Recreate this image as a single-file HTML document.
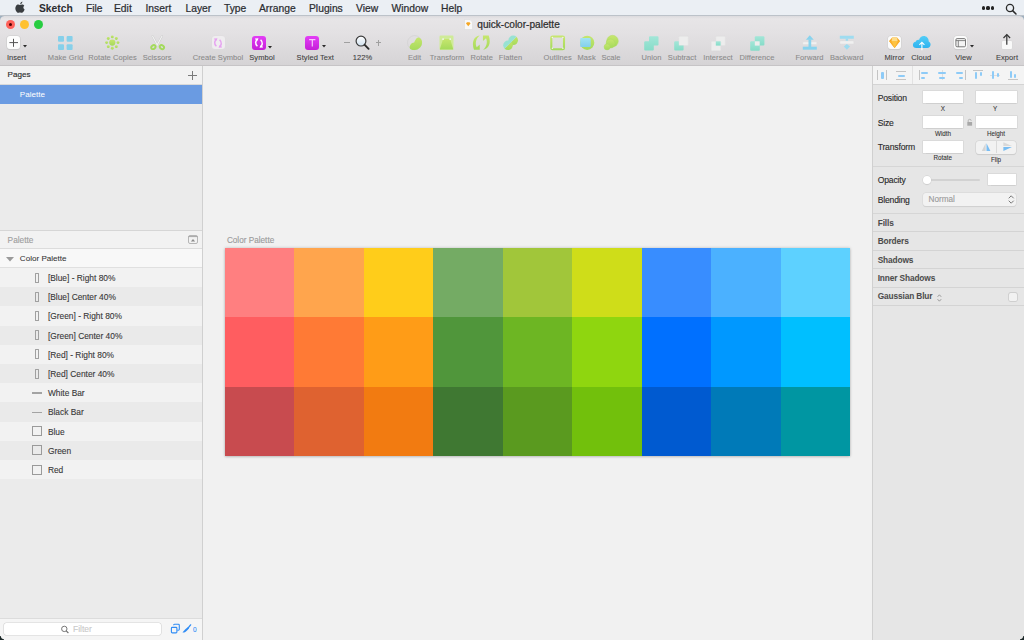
<!DOCTYPE html>
<html><head><meta charset="utf-8"><style>
html,body{margin:0;padding:0;width:1024px;height:640px;overflow:hidden;background:#f1f1f1;font-family:"Liberation Sans", sans-serif;}
.a{position:absolute;}
.t{position:absolute;line-height:1;white-space:nowrap;}
svg{overflow:visible}
</style></head><body>
<div class="a" style="left:0px;top:0px;width:1024px;height:16px;background:#ebeff4"></div>
<div class="a" style="left:0px;top:15px;width:1024px;height:1px;background:#bcc2c9"></div>
<svg class="a" style="left:14.5px;top:1px" width="11" height="13" viewBox="0 0 11 13"><path d="M4.9 4.1C5.6 4.1 6.2 3.6 7.1 3.6 8 3.6 8.8 4.1 9.3 4.8 8.1 5.5 7.9 7.5 9.6 8.4 9.3 9.3 8.9 10 8.4 10.7 7.9 11.4 7.4 11.8 6.8 11.8 6.1 11.8 5.8 11.4 4.9 11.4 4 11.4 3.7 11.8 3.1 11.8 2.3 11.8 1.7 11 1.2 10.2 .2 8.6 0 6.4 1 5 1.6 4.1 2.4 3.6 3.3 3.6 4 3.6 4.4 4.1 4.9 4.1z" fill="#3a3d40"/><path d="M5.2 3.2C5.2 2 6.1 .9 7.4 .5 7.5 1.8 6.5 3 5.2 3.2z" fill="#3a3d40"/></svg>
<div class="t" style="left:39px;top:3.68px;font-size:10.3px;color:#2b2d31;font-weight:700;letter-spacing:0px;-webkit-text-stroke-width:0px;">Sketch</div>
<div class="t" style="left:86px;top:3.68px;font-size:10.3px;color:#2b2d31;font-weight:400;letter-spacing:0px;-webkit-text-stroke-width:0.22px;">File</div>
<div class="t" style="left:114px;top:3.68px;font-size:10.3px;color:#2b2d31;font-weight:400;letter-spacing:0px;-webkit-text-stroke-width:0.22px;">Edit</div>
<div class="t" style="left:145.5px;top:3.68px;font-size:10.3px;color:#2b2d31;font-weight:400;letter-spacing:0px;-webkit-text-stroke-width:0.22px;">Insert</div>
<div class="t" style="left:185.5px;top:3.68px;font-size:10.3px;color:#2b2d31;font-weight:400;letter-spacing:0px;-webkit-text-stroke-width:0.22px;">Layer</div>
<div class="t" style="left:224px;top:3.68px;font-size:10.3px;color:#2b2d31;font-weight:400;letter-spacing:0px;-webkit-text-stroke-width:0.22px;">Type</div>
<div class="t" style="left:259px;top:3.68px;font-size:10.3px;color:#2b2d31;font-weight:400;letter-spacing:0px;-webkit-text-stroke-width:0.22px;">Arrange</div>
<div class="t" style="left:309px;top:3.68px;font-size:10.3px;color:#2b2d31;font-weight:400;letter-spacing:0px;-webkit-text-stroke-width:0.22px;">Plugins</div>
<div class="t" style="left:356px;top:3.68px;font-size:10.3px;color:#2b2d31;font-weight:400;letter-spacing:0px;-webkit-text-stroke-width:0.22px;">View</div>
<div class="t" style="left:391.5px;top:3.68px;font-size:10.3px;color:#2b2d31;font-weight:400;letter-spacing:0px;-webkit-text-stroke-width:0.22px;">Window</div>
<div class="t" style="left:441px;top:3.68px;font-size:10.3px;color:#2b2d31;font-weight:400;letter-spacing:0px;-webkit-text-stroke-width:0.22px;">Help</div>
<div class="a" style="left:981.9px;top:6.4px;width:3.2px;height:3.2px;background:#222;border-radius:50%"></div>
<div class="a" style="left:986.4px;top:6.4px;width:3.2px;height:3.2px;background:#222;border-radius:50%"></div>
<div class="a" style="left:990.9px;top:6.4px;width:3.2px;height:3.2px;background:#222;border-radius:50%"></div>
<svg class="a" style="left:1005px;top:3px" width="13" height="12" viewBox="0 0 13 12"><circle cx="5" cy="5" r="3.6" fill="none" stroke="#2a2a2a" stroke-width="1.3"/><path d="M7.6 7.6L11 11" stroke="#2a2a2a" stroke-width="1.5" stroke-linecap="round"/></svg>
<div class="a" style="left:0px;top:16px;width:1024px;height:50px;background:linear-gradient(#dcdbde,#e7e5e7 6%,#e3e1e3 35%,#d5d3d5)"></div>
<div class="a" style="left:0px;top:65px;width:1024px;height:1px;background:#c6c4c6"></div>
<div class="a" style="left:5.6px;top:19.8px;width:9px;height:9px;background:#ff6159;border-radius:50%"></div>
<div class="a" style="left:19.9px;top:19.8px;width:9px;height:9px;background:#ffc130;border-radius:50%"></div>
<div class="a" style="left:34.1px;top:19.8px;width:9px;height:9px;background:#28cd41;border-radius:50%"></div>
<div class="a" style="left:8.6px;top:22.8px;width:3px;height:3px;background:#4d0000;border-radius:50%"></div>
<svg class="a" style="left:464px;top:19px" width="9" height="11" viewBox="0 0 9 11"><path d="M0.5 0.5h5.5l2.5 2.5v7.5h-8z" fill="#f8f8f8" stroke="#dcdcdc" stroke-width="0.6"/><path d="M2 4.5l1-1.3h2.5l1 1.3-2.25 2.8z" fill="#f5a623"/></svg>
<div class="t" style="left:477.3px;top:19.75px;font-size:10.1px;color:#2e2e2e;font-weight:400;letter-spacing:0px;-webkit-text-stroke-width:0.22px;">quick-color-palette</div>
<svg class="a" style="left:0;top:0" width="0" height="0"><defs><linearGradient id="gg" x1="0" y1="0" x2="0" y2="1"><stop offset="0" stop-color="#c6e66e"/><stop offset="1" stop-color="#a5da5b"/></linearGradient><linearGradient id="tg" x1="0" y1="0" x2="0" y2="1"><stop offset="0" stop-color="#a3e6d8"/><stop offset="1" stop-color="#86dcc8"/></linearGradient><linearGradient id="bg" x1="0" y1="0" x2="0" y2="1"><stop offset="0" stop-color="#a2e3f3"/><stop offset="1" stop-color="#84d0ec"/></linearGradient><linearGradient id="cg" x1="0" y1="0" x2="0" y2="1"><stop offset="0" stop-color="#52cdf7"/><stop offset="1" stop-color="#2fb3ef"/></linearGradient><linearGradient id="lens" x1="0" y1="0" x2="0" y2="1"><stop offset="0" stop-color="#ffffff"/><stop offset="1" stop-color="#cfe0ee"/></linearGradient></defs></svg>
<div class="a" style="left:6.6px;top:35.7px;width:13.7px;height:13.6px;background:#fdfdfd;border-radius:3px;box-shadow:0 0 0 0.6px #cdcdcd, 0 0.6px 1px rgba(0,0,0,.12)"></div>
<svg class="a" style="left:0px;top:30px" width="24" height="24" viewBox="0 0 24 24"><path d="M13.5 8.8v8M9.4 12.6h8.6" stroke="#555" stroke-width="1"/></svg>
<svg class="a" style="left:23px;top:45.3px" width="5" height="3" viewBox="0 0 5 3"><path d="M0 0h4L2 2.6z" fill="#2a2a2a"/></svg>
<div class="t" style="left:-83.5px;width:200px;text-align:center;top:53.85px;font-size:7.5px;color:#3e3e3e;font-weight:400;letter-spacing:0.08px;-webkit-text-stroke-width:0.08px;">Insert</div>
<svg class="a" style="left:58px;top:36px" width="15" height="14" viewBox="0 0 15 14"><g fill="#86d0ea"><rect x="0" y="0" width="6" height="5.8" rx="1"/><rect x="8.6" y="0" width="6" height="5.8" rx="1"/><rect x="0" y="8.2" width="6" height="5.8" rx="1"/><rect x="8.6" y="8.2" width="6" height="5.8" rx="1"/></g></svg>
<div class="t" style="left:-34.5px;width:200px;text-align:center;top:53.85px;font-size:7.5px;color:#8a8a8a;font-weight:400;letter-spacing:0.08px;-webkit-text-stroke-width:0.08px;">Make Grid</div>
<svg class="a" style="left:105px;top:35px" width="15" height="15" viewBox="0 0 15 15"><g fill="url(#gg)"><circle cx="13.00" cy="7.60" r="1.45"/><circle cx="11.33" cy="11.63" r="1.45"/><circle cx="7.30" cy="13.30" r="1.45"/><circle cx="3.27" cy="11.63" r="1.45"/><circle cx="1.60" cy="7.60" r="1.45"/><circle cx="3.27" cy="3.57" r="1.45"/><circle cx="7.30" cy="1.90" r="1.45"/><circle cx="11.33" cy="3.57" r="1.45"/><circle cx="7.3" cy="7.6" r="3.1"/></g></svg>
<div class="t" style="left:12.599999999999994px;width:200px;text-align:center;top:53.85px;font-size:7.5px;color:#8a8a8a;font-weight:400;letter-spacing:0.08px;-webkit-text-stroke-width:0.08px;">Rotate Copies</div>
<svg class="a" style="left:150px;top:35px" width="15" height="15" viewBox="0 0 15 15"><path d="M2.6 1.2L7.4 10.2M11.9 1.2L7.1 10.2" stroke="#c9c9c9" stroke-width="1.9" stroke-linecap="round"/><path d="M2.6 1.2L7.4 10.2M11.9 1.2L7.1 10.2" stroke="#f3f3f3" stroke-width="1.1" stroke-linecap="round"/><g fill="none" stroke="#a3da5c" stroke-width="1.9"><ellipse cx="3.4" cy="12.1" rx="2.3" ry="1.8" transform="rotate(-40 3.4 12.1)"/><ellipse cx="11.9" cy="12.1" rx="2.3" ry="1.8" transform="rotate(40 11.9 12.1)"/></g></svg>
<div class="t" style="left:57.19999999999999px;width:200px;text-align:center;top:53.85px;font-size:7.5px;color:#8a8a8a;font-weight:400;letter-spacing:0.08px;-webkit-text-stroke-width:0.08px;">Scissors</div>
<div class="a" style="left:211.8px;top:36.2px;width:13px;height:13.3px;background:#efedef;border-radius:3px;box-shadow:0 0 0 0.5px #dedcde"></div>
<svg class="a" style="left:211.4px;top:36px" width="14" height="14" viewBox="0 0 14 14"><path d="M6 3.4C3.4 4.2 2.7 7.8 5.4 10.3" fill="none" stroke="#e6a3f0" stroke-width="1.5"/><path d="M2.9 2.6L6.6 2.3 4.6 5.6z" fill="#e6a3f0"/><path d="M8 10.6C10.6 9.8 11.3 6.2 8.6 3.7" fill="none" stroke="#e6a3f0" stroke-width="1.5"/><path d="M11.1 11.4L7.4 11.7 9.4 8.4z" fill="#e6a3f0"/></svg>
<div class="t" style="left:118px;width:200px;text-align:center;top:53.85px;font-size:7.5px;color:#8a8a8a;font-weight:400;letter-spacing:0.08px;-webkit-text-stroke-width:0.08px;">Create Symbol</div>
<div class="a" style="left:252.1px;top:35.8px;width:13.7px;height:14px;background:linear-gradient(#e33ef6,#c51ed8);border-radius:3px"></div>
<svg class="a" style="left:252px;top:35.8px" width="14" height="14" viewBox="0 0 14 14"><path d="M6 3.4C3.4 4.2 2.7 7.8 5.4 10.3" fill="none" stroke="#ffffff" stroke-width="1.5"/><path d="M2.9 2.6L6.6 2.3 4.6 5.6z" fill="#ffffff"/><path d="M8 10.6C10.6 9.8 11.3 6.2 8.6 3.7" fill="none" stroke="#ffffff" stroke-width="1.5"/><path d="M11.1 11.4L7.4 11.7 9.4 8.4z" fill="#ffffff"/></svg>
<svg class="a" style="left:268.4px;top:45.6px" width="5" height="3" viewBox="0 0 5 3"><path d="M0 0h4L2 2.6z" fill="#2a2a2a"/></svg>
<div class="t" style="left:162px;width:200px;text-align:center;top:53.85px;font-size:7.5px;color:#3e3e3e;font-weight:400;letter-spacing:0.08px;-webkit-text-stroke-width:0.08px;">Symbol</div>
<div class="a" style="left:305px;top:35.5px;width:14.3px;height:14.6px;background:linear-gradient(#e33ef6,#c51ed8);border-radius:3px"></div>
<svg class="a" style="left:305px;top:35.5px" width="15" height="15" viewBox="0 0 15 15"><path d="M4.1 3.7h6.3M7.25 3.7v6.8" stroke="#fbe6ff" stroke-width="1"/></svg>
<svg class="a" style="left:321.8px;top:45.2px" width="5" height="3" viewBox="0 0 5 3"><path d="M0 0h4L2 2.6z" fill="#2a2a2a"/></svg>
<div class="t" style="left:215.3px;width:200px;text-align:center;top:53.85px;font-size:7.5px;color:#3e3e3e;font-weight:400;letter-spacing:0.08px;-webkit-text-stroke-width:0.08px;">Styled Text</div>
<div class="a" style="left:344.1px;top:42.3px;width:5.9px;height:1.1px;background:#a0a0a0"></div>
<svg class="a" style="left:350px;top:30px" width="24" height="24" viewBox="0 0 24 24"><circle cx="11" cy="11.1" r="4.9" fill="url(#lens)" stroke="#3a3a3a" stroke-width="1.2"/><path d="M14.7 14.8L18.6 18.8" stroke="#2a2a2a" stroke-width="1.9" stroke-linecap="round"/></svg>
<div class="a" style="left:375.6px;top:42.3px;width:5.5px;height:1.1px;background:#a0a0a0"></div>
<div class="a" style="left:377.8px;top:40px;width:1.1px;height:5.5px;background:#a0a0a0"></div>
<div class="t" style="left:262.6px;width:200px;text-align:center;top:53.85px;font-size:7.5px;color:#3e3e3e;font-weight:400;letter-spacing:0.08px;-webkit-text-stroke-width:0.08px;">122%</div>
<svg class="a" style="left:404px;top:32px" width="22" height="22" viewBox="0 0 22 22"><circle cx="10.6" cy="10.7" r="7.1" fill="none" stroke="#cfcfcf" stroke-width="0.6"/><path d="M14.8 5.6C17.4 6.5 18.6 9 17.9 11.9 17.2 15 14.4 17.6 11 18 8.4 18.3 6.2 17.5 5.7 15.9 5.3 14.4 6.4 12.1 8.1 10.9L10.2 10.4C10.8 9 11.6 7.2 12.6 6.2 13.2 5.7 14 5.4 14.8 5.6z" fill="url(#gg)"/></svg>
<div class="t" style="left:314.6px;width:200px;text-align:center;top:53.85px;font-size:7.5px;color:#8a8a8a;font-weight:400;letter-spacing:0.08px;-webkit-text-stroke-width:0.08px;">Edit</div>
<svg class="a" style="left:436px;top:32px" width="20" height="20" viewBox="0 0 20 20"><rect x="3.5" y="3.5" width="14" height="14.3" rx="1.2" fill="#cfeb98"/><path d="M7.1 7.1h7.1l3.1 10.4H3.8z" fill="url(#gg)"/><circle cx="7.1" cy="7.1" r="0.95" fill="#f4f4f4"/><circle cx="14.2" cy="7.1" r="0.95" fill="#f4f4f4"/></svg>
<div class="t" style="left:347px;width:200px;text-align:center;top:53.85px;font-size:7.5px;color:#8a8a8a;font-weight:400;letter-spacing:0.08px;-webkit-text-stroke-width:0.08px;">Transform</div>
<svg class="a" style="left:468px;top:32px" width="24" height="20" viewBox="0 0 24 20"><path d="M11.7 3.6C6 4.3 3.3 10 6 17.8H11.75V12.4L8.7 15.2C7 12 7.8 6.5 11.7 3.6z" fill="url(#gg)"/><path d="M15 17.8C20.7 17.1 23.4 11.4 20.7 3.6H14.95V9L18 6.2C19.7 9.4 18.9 14.9 15 17.8z" fill="url(#gg)"/></svg>
<div class="t" style="left:381.7px;width:200px;text-align:center;top:53.85px;font-size:7.5px;color:#8a8a8a;font-weight:400;letter-spacing:0.08px;-webkit-text-stroke-width:0.08px;">Rotate</div>
<svg class="a" style="left:500px;top:32px" width="22" height="22" viewBox="0 0 22 22"><defs><clipPath id="ft"><path d="M0 0H21.3L0 21.3z"/></clipPath><clipPath id="fb"><path d="M21.3 0L0 21.3H22V0z"/></clipPath></defs><g clip-path="url(#fb)" fill="url(#gg)"><circle cx="13.2" cy="8.3" r="4.8"/><circle cx="8" cy="13.3" r="4.8"/></g><g clip-path="url(#ft)" fill="#98e2d3"><circle cx="13.2" cy="8.3" r="4.8"/><circle cx="8" cy="13.3" r="4.8"/></g></svg>
<div class="t" style="left:410.5px;width:200px;text-align:center;top:53.85px;font-size:7.5px;color:#8a8a8a;font-weight:400;letter-spacing:0.08px;-webkit-text-stroke-width:0.08px;">Flatten</div>
<svg class="a" style="left:546px;top:32px" width="22" height="22" viewBox="0 0 22 22"><rect x="5.3" y="4.5" width="12.7" height="12.8" rx="1.3" fill="none" stroke="url(#gg)" stroke-width="2.1"/><g fill="#f2f2f2"><circle cx="6.4" cy="5.6" r="0.75"/><circle cx="16.9" cy="5.6" r="0.75"/><circle cx="6.4" cy="16.2" r="0.75"/><circle cx="16.9" cy="16.2" r="0.75"/></g></svg>
<div class="t" style="left:457.70000000000005px;width:200px;text-align:center;top:53.85px;font-size:7.5px;color:#8a8a8a;font-weight:400;letter-spacing:0.08px;-webkit-text-stroke-width:0.08px;">Outlines</div>
<svg class="a" style="left:576px;top:32px" width="22" height="22" viewBox="0 0 22 22"><circle cx="11.2" cy="10.8" r="7.1" fill="url(#gg)"/><rect x="4.2" y="6" width="10.5" height="8.9" rx="1" fill="url(#bg)"/></svg>
<div class="t" style="left:486.6px;width:200px;text-align:center;top:53.85px;font-size:7.5px;color:#8a8a8a;font-weight:400;letter-spacing:0.08px;-webkit-text-stroke-width:0.08px;">Mask</div>
<svg class="a" style="left:600px;top:32px" width="22" height="22" viewBox="0 0 22 22"><circle cx="12.5" cy="9.1" r="5.8" fill="url(#gg)" stroke="#b4dc66" stroke-width="0.5"/><circle cx="10.6" cy="11.5" r="4.5" fill="url(#gg)" stroke="#acd862" stroke-width="0.5"/><circle cx="7.1" cy="14.9" r="3" fill="url(#gg)" stroke="#acd862" stroke-width="0.5"/></svg>
<div class="t" style="left:511px;width:200px;text-align:center;top:53.85px;font-size:7.5px;color:#8a8a8a;font-weight:400;letter-spacing:0.08px;-webkit-text-stroke-width:0.08px;">Scale</div>
<svg class="a" style="left:644px;top:35.5px" width="15" height="15" viewBox="0 0 15 15"><path d="M5 1.2a1 1 0 0 1 1-1h7.5a1 1 0 0 1 1 1v7.3a1 1 0 0 1-1 1H9.8v4a1 1 0 0 1-1 1H1.2a1 1 0 0 1-1-1V6.3a1 1 0 0 1 1-1H5z" fill="url(#tg)"/></svg>
<div class="t" style="left:551.6px;width:200px;text-align:center;top:53.85px;font-size:7.5px;color:#8a8a8a;font-weight:400;letter-spacing:0.08px;-webkit-text-stroke-width:0.08px;">Union</div>
<svg class="a" style="left:674px;top:35.5px" width="15" height="15" viewBox="0 0 15 15"><rect x="4.8" y="0.2" width="9.6" height="9.4" rx="1" fill="#ededed" stroke="#dedede" stroke-width="0.4"/><path d="M1.2 5.3H4.8v4.3H9.6v4a1 1 0 0 1-1 1H1.2a1 1 0 0 1-1-1V6.3a1 1 0 0 1 1-1z" fill="url(#tg)"/></svg>
<div class="t" style="left:582.1px;width:200px;text-align:center;top:53.85px;font-size:7.5px;color:#8a8a8a;font-weight:400;letter-spacing:0.08px;-webkit-text-stroke-width:0.08px;">Subtract</div>
<svg class="a" style="left:711px;top:35.5px" width="15" height="15" viewBox="0 0 15 15"><rect x="4.8" y="0.2" width="9.6" height="9.4" rx="1" fill="#ededed" stroke="#dedede" stroke-width="0.4"/><rect x="0.2" y="5.3" width="9.6" height="9.4" rx="1" fill="#ededed" stroke="#dedede" stroke-width="0.4"/><rect x="4.8" y="5.3" width="4.8" height="4.3" fill="url(#tg)"/></svg>
<div class="t" style="left:618px;width:200px;text-align:center;top:53.85px;font-size:7.5px;color:#8a8a8a;font-weight:400;letter-spacing:0.08px;-webkit-text-stroke-width:0.08px;">Intersect</div>
<svg class="a" style="left:749.5px;top:35.5px" width="15" height="15" viewBox="0 0 15 15"><rect x="4.8" y="0.2" width="9.6" height="9.4" rx="1" fill="url(#tg)"/><rect x="0.2" y="5.3" width="9.6" height="9.4" rx="1" fill="url(#tg)"/><rect x="4.8" y="5.3" width="4.8" height="4.3" fill="#ededed"/></svg>
<div class="t" style="left:657px;width:200px;text-align:center;top:53.85px;font-size:7.5px;color:#8a8a8a;font-weight:400;letter-spacing:0.08px;-webkit-text-stroke-width:0.08px;">Difference</div>
<svg class="a" style="left:802px;top:35px" width="16" height="16" viewBox="0 0 16 16"><path d="M7.8 0.2L11.7 4.7H3.9z" fill="#88d3ee"/><rect x="0.8" y="6.8" width="14" height="2.7" rx="0.6" fill="#f0f0f0" stroke="#dcdcdc" stroke-width="0.4"/><rect x="6.5" y="4.5" width="2.7" height="7.5" fill="#88d3ee"/><rect x="0.8" y="11.7" width="14" height="3" fill="#88d3ee"/></svg>
<div class="t" style="left:709.5px;width:200px;text-align:center;top:53.85px;font-size:7.5px;color:#8a8a8a;font-weight:400;letter-spacing:0.08px;-webkit-text-stroke-width:0.08px;">Forward</div>
<svg class="a" style="left:839px;top:35px" width="16" height="16" viewBox="0 0 16 16"><rect x="0.8" y="0.75" width="14" height="3" fill="#9fdcf0"/><rect x="6.7" y="3.5" width="2.4" height="2.6" fill="#9fdcf0"/><rect x="0.8" y="5.9" width="14" height="3" rx="0.6" fill="#f0f0f0" stroke="#dcdcdc" stroke-width="0.4"/><path d="M7.9 9L11 11.6 7.9 14.7 4.8 11.6z" fill="#9fdcf0"/></svg>
<div class="t" style="left:746.7px;width:200px;text-align:center;top:53.85px;font-size:7.5px;color:#8a8a8a;font-weight:400;letter-spacing:0.08px;-webkit-text-stroke-width:0.08px;">Backward</div>
<div class="a" style="left:887.8px;top:35.8px;width:13.5px;height:13.7px;background:#fbfbfb;border-radius:3px;box-shadow:0 0 0 0.6px #d2d2d2, 0 0.6px 1px rgba(0,0,0,.1)"></div>
<svg class="a" style="left:884px;top:32px" width="20" height="20" viewBox="0 0 20 20"><path d="M8.2 5.6h4.8l3 3.3-5.4 7.2-5.5-7.2z" fill="#f7a21b"/><path d="M5.1 8.9h10.9l-5.4 7.2z" fill="#fbb02a"/><path d="M7.5 8.9h6.2l-3.1 7.2z" fill="#fdc342"/><path d="M8.2 5.6l-0.7 3.3h6.2l-0.7-3.3z" fill="#fddd8a"/></svg>
<div class="t" style="left:794.5px;width:200px;text-align:center;top:53.85px;font-size:7.5px;color:#3e3e3e;font-weight:400;letter-spacing:0.08px;-webkit-text-stroke-width:0.08px;">Mirror</div>
<svg class="a" style="left:908px;top:32px" width="26" height="22" viewBox="0 0 26 22"><path d="M8.2 16C6.2 16 4.9 14.6 4.9 12.9 4.9 11.3 6.1 10 7.7 9.8 8 8.6 9 7.8 10.3 7.8 10.5 7.8 10.8 7.8 11 7.9 11.8 5.6 13.6 4.1 15.8 4.1c2.7 0 4.9 2.2 4.9 4.9 0 .2 0 .4 0 .5C21.8 9.9 22.6 11.1 22.6 12.6c0 1.9-1.5 3.4-3.4 3.4z" fill="url(#cg)"/><path d="M13.9 18.3V10.3M11.4 12.8L13.9 10.2l2.5 2.6" stroke="#fff" stroke-width="1.1" fill="none"/></svg>
<div class="t" style="left:821.3px;width:200px;text-align:center;top:53.85px;font-size:7.5px;color:#3e3e3e;font-weight:400;letter-spacing:0.08px;-webkit-text-stroke-width:0.08px;">Cloud</div>
<div class="a" style="left:954px;top:36px;width:13px;height:13px;background:#fbfbfb;border-radius:3px;box-shadow:0 0 0 0.6px #d2d2d2, 0 0.6px 1px rgba(0,0,0,.1)"></div>
<svg class="a" style="left:950px;top:32px" width="22" height="22" viewBox="0 0 22 22"><rect x="5.9" y="6.6" width="9.6" height="8.2" rx="1.2" fill="#f4f4f4" stroke="#6a6a6a" stroke-width="0.9"/><path d="M5.9 8.6h9.6M8.3 8.6v6.2" stroke="#6a6a6a" stroke-width="0.8"/></svg>
<svg class="a" style="left:970px;top:45.4px" width="5" height="3" viewBox="0 0 5 3"><path d="M0 0h4L2 2.6z" fill="#2a2a2a"/></svg>
<div class="t" style="left:863.5px;width:200px;text-align:center;top:53.85px;font-size:7.5px;color:#3e3e3e;font-weight:400;letter-spacing:0.08px;-webkit-text-stroke-width:0.08px;">View</div>
<div class="a" style="left:1001.5px;top:41.3px;width:10.5px;height:7.8px;background:#f9f9f9;border-radius:1px;box-shadow:0 0 0 0.5px #d8d8d8"></div>
<svg class="a" style="left:998px;top:30px" width="20" height="20" viewBox="0 0 20 20"><path d="M8.8 4.8V14.8" stroke="#333" stroke-width="1.2"/><path d="M5.5 8L8.8 4.6 12.1 8" stroke="#333" stroke-width="1.2" fill="none"/></svg>
<div class="t" style="left:907px;width:200px;text-align:center;top:53.85px;font-size:7.5px;color:#3e3e3e;font-weight:400;letter-spacing:0.08px;-webkit-text-stroke-width:0.08px;">Export</div>
<div class="a" style="left:0px;top:66px;width:202px;height:553px;background:#ebebeb"></div>
<div class="a" style="left:202px;top:66px;width:1px;height:574px;background:#d0d0d0"></div>
<div class="a" style="left:0px;top:66px;width:202px;height:18px;background:#f2f2f2"></div>
<div class="a" style="left:0px;top:84px;width:202px;height:1px;background:#d9d9d9"></div>
<div class="t" style="left:7.6px;top:71.24px;font-size:8.1px;color:#2e2e2e;font-weight:400;letter-spacing:0px;-webkit-text-stroke-width:0.12px;-webkit-text-stroke-width:0.15px;">Pages</div>
<svg class="a" style="left:188px;top:71px" width="9" height="9" viewBox="0 0 9 9"><path d="M4.5 0v9M0 4.5h9" stroke="#7a7a7a" stroke-width="1"/></svg>
<div class="a" style="left:0px;top:85px;width:202px;height:19px;background:#6a9be2"></div>
<div class="t" style="left:19.8px;top:91.04px;font-size:8.1px;color:#ffffff;font-weight:400;letter-spacing:0px;-webkit-text-stroke-width:0px;">Palette</div>
<div class="a" style="left:0px;top:230px;width:202px;height:1px;background:#d6d6d6"></div>
<div class="a" style="left:0px;top:231px;width:202px;height:17px;background:#f2f2f2"></div>
<div class="a" style="left:0px;top:248px;width:202px;height:1px;background:#dcdcdc"></div>
<div class="t" style="left:7.6px;top:235.67px;font-size:8.3px;color:#9e9e9e;font-weight:400;letter-spacing:0px;-webkit-text-stroke-width:0.12px;">Palette</div>
<svg class="a" style="left:188px;top:235px" width="10" height="9" viewBox="0 0 10 9"><rect x="0.5" y="0.5" width="9" height="8" rx="1.5" fill="none" stroke="#a6a6a6" stroke-width="0.8"/><path d="M0.5 1.6h9" stroke="#a6a6a6" stroke-width="1"/><path d="M2.9 6.6h4.2L5 4.1z" fill="#8a8a8a"/></svg>
<div class="a" style="left:0px;top:249px;width:202px;height:18px;background:#f8f8f8"></div>
<div class="a" style="left:0px;top:267px;width:202px;height:1px;background:#e0e0e0"></div>
<svg class="a" style="left:6px;top:256.5px" width="9" height="5" viewBox="0 0 9 5"><path d="M0 0h8L4 4.5z" fill="#9a9a9a"/></svg>
<div class="t" style="left:19.8px;top:254.84px;font-size:8.1px;color:#333333;font-weight:400;letter-spacing:0px;-webkit-text-stroke-width:0.12px;-webkit-text-stroke-width:0.05px;">Color Palette</div>
<div class="a" style="left:0px;top:268.0px;width:202px;height:19.2px;background:#f2f2f2"></div>
<div class="a" style="left:35.1px;top:272.6px;width:3.9px;height:10px;border:0.8px solid #a0a0a0;box-sizing:border-box;border-radius:0.5px"></div>
<div class="t" style="left:47.9px;top:274.09px;font-size:8.4px;color:#383838;font-weight:400;letter-spacing:0px;-webkit-text-stroke-width:0.12px;-webkit-text-stroke-width:0.1px;">[Blue] - Right 80%</div>
<div class="a" style="left:0px;top:287.2px;width:202px;height:19.2px;background:#eaeaea"></div>
<div class="a" style="left:35.1px;top:291.8px;width:3.9px;height:10px;border:0.8px solid #a0a0a0;box-sizing:border-box;border-radius:0.5px"></div>
<div class="t" style="left:47.9px;top:293.29px;font-size:8.4px;color:#383838;font-weight:400;letter-spacing:0px;-webkit-text-stroke-width:0.12px;-webkit-text-stroke-width:0.1px;">[Blue] Center 40%</div>
<div class="a" style="left:0px;top:306.4px;width:202px;height:19.2px;background:#f2f2f2"></div>
<div class="a" style="left:35.1px;top:311.0px;width:3.9px;height:10px;border:0.8px solid #a0a0a0;box-sizing:border-box;border-radius:0.5px"></div>
<div class="t" style="left:47.9px;top:312.49px;font-size:8.4px;color:#383838;font-weight:400;letter-spacing:0px;-webkit-text-stroke-width:0.12px;-webkit-text-stroke-width:0.1px;">[Green] - Right 80%</div>
<div class="a" style="left:0px;top:325.6px;width:202px;height:19.2px;background:#eaeaea"></div>
<div class="a" style="left:35.1px;top:330.2px;width:3.9px;height:10px;border:0.8px solid #a0a0a0;box-sizing:border-box;border-radius:0.5px"></div>
<div class="t" style="left:47.9px;top:331.69px;font-size:8.4px;color:#383838;font-weight:400;letter-spacing:0px;-webkit-text-stroke-width:0.12px;-webkit-text-stroke-width:0.1px;">[Green] Center 40%</div>
<div class="a" style="left:0px;top:344.8px;width:202px;height:19.2px;background:#f2f2f2"></div>
<div class="a" style="left:35.1px;top:349.4px;width:3.9px;height:10px;border:0.8px solid #a0a0a0;box-sizing:border-box;border-radius:0.5px"></div>
<div class="t" style="left:47.9px;top:350.89px;font-size:8.4px;color:#383838;font-weight:400;letter-spacing:0px;-webkit-text-stroke-width:0.12px;-webkit-text-stroke-width:0.1px;">[Red] - Right 80%</div>
<div class="a" style="left:0px;top:364.0px;width:202px;height:19.2px;background:#eaeaea"></div>
<div class="a" style="left:35.1px;top:368.6px;width:3.9px;height:10px;border:0.8px solid #a0a0a0;box-sizing:border-box;border-radius:0.5px"></div>
<div class="t" style="left:47.9px;top:370.09px;font-size:8.4px;color:#383838;font-weight:400;letter-spacing:0px;-webkit-text-stroke-width:0.12px;-webkit-text-stroke-width:0.1px;">[Red] Center 40%</div>
<div class="a" style="left:0px;top:383.2px;width:202px;height:19.2px;background:#f2f2f2"></div>
<div class="a" style="left:31.8px;top:392.4px;width:10.4px;height:1.8px;background:#a3a3a3"></div>
<div class="t" style="left:47.9px;top:389.29px;font-size:8.4px;color:#383838;font-weight:400;letter-spacing:0px;-webkit-text-stroke-width:0.12px;-webkit-text-stroke-width:0.1px;">White Bar</div>
<div class="a" style="left:0px;top:402.4px;width:202px;height:19.2px;background:#eaeaea"></div>
<div class="a" style="left:31.8px;top:411.6px;width:10.4px;height:1.8px;background:#a3a3a3"></div>
<div class="t" style="left:47.9px;top:408.49px;font-size:8.4px;color:#383838;font-weight:400;letter-spacing:0px;-webkit-text-stroke-width:0.12px;-webkit-text-stroke-width:0.1px;">Black Bar</div>
<div class="a" style="left:0px;top:421.6px;width:202px;height:19.2px;background:#f2f2f2"></div>
<div class="a" style="left:31.8px;top:426.1px;width:10.2px;height:10px;border:0.9px solid #9a9a9a;box-sizing:border-box"></div>
<div class="t" style="left:47.9px;top:427.69px;font-size:8.4px;color:#383838;font-weight:400;letter-spacing:0px;-webkit-text-stroke-width:0.12px;-webkit-text-stroke-width:0.1px;">Blue</div>
<div class="a" style="left:0px;top:440.8px;width:202px;height:19.2px;background:#eaeaea"></div>
<div class="a" style="left:31.8px;top:445.3px;width:10.2px;height:10px;border:0.9px solid #9a9a9a;box-sizing:border-box"></div>
<div class="t" style="left:47.9px;top:446.89px;font-size:8.4px;color:#383838;font-weight:400;letter-spacing:0px;-webkit-text-stroke-width:0.12px;-webkit-text-stroke-width:0.1px;">Green</div>
<div class="a" style="left:0px;top:460.0px;width:202px;height:19.2px;background:#f2f2f2"></div>
<div class="a" style="left:31.8px;top:464.5px;width:10.2px;height:10px;border:0.9px solid #9a9a9a;box-sizing:border-box"></div>
<div class="t" style="left:47.9px;top:466.09px;font-size:8.4px;color:#383838;font-weight:400;letter-spacing:0px;-webkit-text-stroke-width:0.12px;-webkit-text-stroke-width:0.1px;">Red</div>
<div class="a" style="left:0px;top:618px;width:202px;height:1px;background:#dcdcdc"></div>
<div class="a" style="left:0px;top:619px;width:202px;height:21px;background:#f5f5f5"></div>
<div class="a" style="left:4px;top:622.5px;width:156.5px;height:12.2px;background:#fff;border-radius:2.5px;box-shadow:0 0 0 0.6px #d4d4d4"></div>
<svg class="a" style="left:58px;top:622px" width="14" height="14" viewBox="0 0 14 14"><circle cx="6.3" cy="6.9" r="2.7" fill="none" stroke="#6f6f6f" stroke-width="0.95"/><path d="M8.2 8.8L10.4 11" stroke="#6f6f6f" stroke-width="1.1"/></svg>
<div class="t" style="left:73px;top:625.40px;font-size:8.5px;color:#c9c9c9;font-weight:400;letter-spacing:0px;-webkit-text-stroke-width:0.12px;">Filter</div>
<svg class="a" style="left:166px;top:620px" width="16" height="16" viewBox="0 0 16 16"><rect x="5.4" y="7.4" width="5.5" height="5.5" rx="0.9" fill="none" stroke="#2f8cf5" stroke-width="1.1"/><path d="M7.6 5.3V5.2a.9.9 0 0 1 .9-.9h3.9a.9.9 0 0 1 .9.9v4.1a.9.9 0 0 1-.9.9H11.3" fill="none" stroke="#2f8cf5" stroke-width="1.1"/></svg>
<svg class="a" style="left:180px;top:622px" width="12" height="12" viewBox="0 0 12 12"><path d="M2.5 10.5C4 8.7 6 6.6 8 5.1L9.1 6.2C8.4 7.2 7 8.8 5.3 9.9 4.3 10.5 3.2 10.8 2.5 10.5z" fill="#2f8cf5"/><path d="M8.4 5.6L10.6 2.9" stroke="#2f8cf5" stroke-width="1.4" stroke-linecap="round"/></svg>
<div class="t" style="left:193px;top:626.80px;font-size:6.5px;color:#2f8cf5;font-weight:400;letter-spacing:0px;-webkit-text-stroke-width:0.08px;">0</div>
<div class="t" style="left:226.9px;top:237.46px;font-size:8.2px;color:#9a9a9a;font-weight:400;letter-spacing:0px;-webkit-text-stroke-width:0.12px;">Color Palette</div>
<div class="a" style="left:225px;top:248px;width:625px;height:208px;box-shadow:0 0 3px rgba(0,0,0,.2), 0 1px 2px rgba(0,0,0,.12)"></div>
<div class="a" style="left:225px;top:248px;width:69px;height:69px;background:#ff7f80"></div>
<div class="a" style="left:294px;top:248px;width:70px;height:69px;background:#ffa54d"></div>
<div class="a" style="left:364px;top:248px;width:69px;height:69px;background:#ffcd1a"></div>
<div class="a" style="left:433px;top:248px;width:70px;height:69px;background:#74ab64"></div>
<div class="a" style="left:503px;top:248px;width:69px;height:69px;background:#a1c63a"></div>
<div class="a" style="left:572px;top:248px;width:70px;height:69px;background:#cfdd19"></div>
<div class="a" style="left:642px;top:248px;width:69px;height:69px;background:#388dff"></div>
<div class="a" style="left:711px;top:248px;width:70px;height:69px;background:#4bb1ff"></div>
<div class="a" style="left:781px;top:248px;width:69px;height:69px;background:#5dd1ff"></div>
<div class="a" style="left:225px;top:317px;width:69px;height:70px;background:#ff5d60"></div>
<div class="a" style="left:294px;top:317px;width:70px;height:70px;background:#ff7a35"></div>
<div class="a" style="left:364px;top:317px;width:69px;height:70px;background:#ff9c17"></div>
<div class="a" style="left:433px;top:317px;width:70px;height:70px;background:#50963b"></div>
<div class="a" style="left:503px;top:317px;width:69px;height:70px;background:#6db623"></div>
<div class="a" style="left:572px;top:317px;width:70px;height:70px;background:#8fd60f"></div>
<div class="a" style="left:642px;top:317px;width:69px;height:70px;background:#0070ff"></div>
<div class="a" style="left:711px;top:317px;width:70px;height:70px;background:#0098ff"></div>
<div class="a" style="left:781px;top:317px;width:69px;height:70px;background:#00bfff"></div>
<div class="a" style="left:225px;top:387px;width:69px;height:69px;background:#c84b4f"></div>
<div class="a" style="left:294px;top:387px;width:70px;height:69px;background:#df6230"></div>
<div class="a" style="left:364px;top:387px;width:69px;height:69px;background:#f27b11"></div>
<div class="a" style="left:433px;top:387px;width:70px;height:69px;background:#3f7832"></div>
<div class="a" style="left:503px;top:387px;width:69px;height:69px;background:#5a9a1f"></div>
<div class="a" style="left:572px;top:387px;width:70px;height:69px;background:#72c00c"></div>
<div class="a" style="left:642px;top:387px;width:69px;height:69px;background:#005ad0"></div>
<div class="a" style="left:711px;top:387px;width:70px;height:69px;background:#007ab8"></div>
<div class="a" style="left:781px;top:387px;width:69px;height:69px;background:#0096a2"></div>
<div class="a" style="left:873px;top:66px;width:151px;height:574px;background:#e6e6e6"></div>
<div class="a" style="left:872px;top:66px;width:1px;height:574px;background:#d0d0d0"></div>
<div class="a" style="left:873px;top:66px;width:151px;height:18px;background:#f4f4f4"></div>
<div class="a" style="left:873px;top:84px;width:151px;height:1px;background:#d4d4d4"></div>
<div class="a" style="left:912px;top:66px;width:1px;height:18px;background:#e2e2e2"></div>
<div class="a" style="left:877.3px;top:70px;width:0.9px;height:10px;background:#c4c4c4"></div>
<div class="a" style="left:886.3px;top:70px;width:0.9px;height:10px;background:#c4c4c4"></div>
<div class="a" style="left:881.4px;top:71.5px;width:2.2px;height:7px;background:#8ecbf7;border-radius:1px"></div>
<div class="a" style="left:896px;top:70.8px;width:10px;height:0.9px;background:#c4c4c4"></div>
<div class="a" style="left:896px;top:79.3px;width:10px;height:0.9px;background:#c4c4c4"></div>
<div class="a" style="left:897.5px;top:74.6px;width:7px;height:2.2px;background:#8ecbf7;border-radius:1px"></div>
<div class="a" style="left:919.2px;top:70px;width:0.9px;height:10px;background:#c4c4c4"></div>
<div class="a" style="left:921.2px;top:71.5px;width:6.8px;height:2.1px;background:#8ecbf7;border-radius:1px"></div>
<div class="a" style="left:921.2px;top:76.7px;width:4px;height:2.1px;background:#8ecbf7;border-radius:1px"></div>
<div class="a" style="left:941.8px;top:70px;width:0.6px;height:10px;background:#dedede"></div>
<div class="a" style="left:937.6px;top:71.5px;width:8.6px;height:2.1px;background:#8ecbf7;border-radius:1px"></div>
<div class="a" style="left:939px;top:76.7px;width:5.8px;height:2.1px;background:#8ecbf7;border-radius:1px"></div>
<div class="a" style="left:964.5px;top:70px;width:0.9px;height:10px;background:#c4c4c4"></div>
<div class="a" style="left:956px;top:71.5px;width:6.8px;height:2.1px;background:#8ecbf7;border-radius:1px"></div>
<div class="a" style="left:958.8px;top:76.7px;width:4px;height:2.1px;background:#8ecbf7;border-radius:1px"></div>
<div class="a" style="left:973px;top:70.2px;width:10px;height:0.9px;background:#c4c4c4"></div>
<div class="a" style="left:974.5px;top:71.6px;width:2.1px;height:7.4px;background:#8ecbf7;border-radius:1px"></div>
<div class="a" style="left:979.5px;top:71.6px;width:2.1px;height:4.4px;background:#8ecbf7;border-radius:1px"></div>
<div class="a" style="left:990px;top:74.8px;width:10px;height:0.6px;background:#dcdcdc"></div>
<div class="a" style="left:992px;top:70.9px;width:2.1px;height:8.4px;background:#8ecbf7;border-radius:1px"></div>
<div class="a" style="left:996.8px;top:73px;width:2.1px;height:4.2px;background:#8ecbf7;border-radius:1px"></div>
<div class="a" style="left:1008px;top:79.3px;width:10px;height:0.9px;background:#c4c4c4"></div>
<div class="a" style="left:1009.6px;top:71.2px;width:2.1px;height:7.2px;background:#8ecbf7;border-radius:1px"></div>
<div class="a" style="left:1014.2px;top:74.3px;width:2.1px;height:4.1px;background:#8ecbf7;border-radius:1px"></div>
<div class="t" style="left:877.7px;top:93.62px;font-size:8.6px;color:#2a2a2a;font-weight:400;letter-spacing:-0.18px;-webkit-text-stroke-width:0.12px;">Position</div>
<div class="a" style="left:922.6px;top:91px;width:40.5px;height:12.2px;background:#fff;box-shadow:0 0 0 0.6px #d2d2d2, 0 0.5px 0.8px rgba(0,0,0,.12)"></div>
<div class="a" style="left:976px;top:91px;width:40.6px;height:12.2px;background:#fff;box-shadow:0 0 0 0.6px #d2d2d2, 0 0.5px 0.8px rgba(0,0,0,.12)"></div>
<div class="t" style="left:842.8px;width:200px;text-align:center;top:106.27px;font-size:6.3px;color:#333;font-weight:400;letter-spacing:0px;-webkit-text-stroke-width:0.08px;">X</div>
<div class="t" style="left:895px;width:200px;text-align:center;top:106.27px;font-size:6.3px;color:#333;font-weight:400;letter-spacing:0px;-webkit-text-stroke-width:0.08px;">Y</div>
<div class="t" style="left:877.7px;top:118.52px;font-size:8.6px;color:#2a2a2a;font-weight:400;letter-spacing:-0.18px;-webkit-text-stroke-width:0.12px;">Size</div>
<div class="a" style="left:922.6px;top:116px;width:40.5px;height:12.2px;background:#fff;box-shadow:0 0 0 0.6px #d2d2d2, 0 0.5px 0.8px rgba(0,0,0,.12)"></div>
<div class="a" style="left:975.8px;top:116px;width:41px;height:12.2px;background:#fff;box-shadow:0 0 0 0.6px #d2d2d2, 0 0.5px 0.8px rgba(0,0,0,.12)"></div>
<svg class="a" style="left:966.8px;top:118.6px" width="5.5" height="7" viewBox="0 0 5.5 7"><rect x="0.3" y="3" width="4.8" height="3.7" fill="#a8a8a8"/><path d="M1.2 3V1.8a1.5 1.5 0 0 1 3 0" fill="none" stroke="#a8a8a8" stroke-width="0.8"/></svg>
<div class="t" style="left:843px;width:200px;text-align:center;top:131.37px;font-size:6.3px;color:#333;font-weight:400;letter-spacing:0px;-webkit-text-stroke-width:0.08px;">Width</div>
<div class="t" style="left:896px;width:200px;text-align:center;top:131.37px;font-size:6.3px;color:#333;font-weight:400;letter-spacing:0px;-webkit-text-stroke-width:0.08px;">Height</div>
<div class="t" style="left:877.7px;top:143.32px;font-size:8.6px;color:#2a2a2a;font-weight:400;letter-spacing:-0.18px;-webkit-text-stroke-width:0.12px;">Transform</div>
<div class="a" style="left:922.6px;top:140.6px;width:40.5px;height:12.6px;background:#fff;box-shadow:0 0 0 0.6px #d2d2d2, 0 0.5px 0.8px rgba(0,0,0,.12)"></div>
<div class="a" style="left:975.7px;top:140.7px;width:40.7px;height:12.9px;background:#f2f2f2;border-radius:3px;box-shadow:0 0 0 0.6px #d0d0d0, 0 0.5px 0.8px rgba(0,0,0,.12)"></div>
<div class="a" style="left:996.2px;top:141px;width:0.6px;height:12.3px;background:#dadada"></div>
<svg class="a" style="left:981px;top:142.5px" width="11" height="9" viewBox="0 0 11 9"><path d="M4.6 0.3L0.8 7.9H4.6z" fill="#d4d4d4"/><path d="M5.5 0.3L9.4 7.9H5.5z" fill="#78bdf3"/></svg>
<svg class="a" style="left:1002.5px;top:142.2px" width="10" height="10" viewBox="0 0 10 10"><path d="M0.4 0.2L9 4.1H0.4z" fill="#d8d8d8"/><path d="M0.4 5H9L0.4 8.9z" fill="#78bdf3"/></svg>
<div class="t" style="left:842.7px;width:200px;text-align:center;top:155.37px;font-size:6.3px;color:#333;font-weight:400;letter-spacing:0px;-webkit-text-stroke-width:0.08px;">Rotate</div>
<div class="t" style="left:896px;width:200px;text-align:center;top:156.67px;font-size:6.3px;color:#333;font-weight:400;letter-spacing:0px;-webkit-text-stroke-width:0.08px;">Flip</div>
<div class="a" style="left:873px;top:166px;width:151px;height:1px;background:#d6d6d6"></div>
<div class="t" style="left:877.7px;top:176.02px;font-size:8.6px;color:#2a2a2a;font-weight:400;letter-spacing:-0.18px;-webkit-text-stroke-width:0.12px;">Opacity</div>
<div class="a" style="left:926px;top:178.9px;width:54px;height:1.8px;background:#d2d2d2;border-radius:1px"></div>
<div class="a" style="left:923px;top:176.1px;width:7.6px;height:7.6px;background:#fff;border-radius:50%;box-shadow:0 0 0 0.4px #d0d0d0,0 0.5px 1px rgba(0,0,0,.2)"></div>
<div class="a" style="left:988px;top:173.9px;width:28.4px;height:11.4px;background:#fff;box-shadow:0 0 0 0.6px #d2d2d2, 0 0.5px 0.8px rgba(0,0,0,.12)"></div>
<div class="t" style="left:877.7px;top:195.52px;font-size:8.6px;color:#2a2a2a;font-weight:400;letter-spacing:-0.18px;-webkit-text-stroke-width:0.12px;">Blending</div>
<div class="a" style="left:923px;top:193px;width:93.4px;height:13px;background:#f2f2f2;border-radius:3px;box-shadow:0 0 0 0.5px #d6d6d6, 0 0.5px 0.8px rgba(0,0,0,.12)"></div>
<div class="t" style="left:928.5px;top:196.26px;font-size:8.2px;color:#9a9a9a;font-weight:400;letter-spacing:0px;-webkit-text-stroke-width:0.12px;">Normal</div>
<svg class="a" style="left:1008px;top:195px" width="7" height="9" viewBox="0 0 7 9"><path d="M0.7 3.3L3.2 0.8 5.7 3.3M0.7 5.7L3.2 8.2 5.7 5.7" fill="none" stroke="#6a6a6a" stroke-width="0.9"/></svg>
<div class="a" style="left:873px;top:212.5px;width:151px;height:1px;background:#d6d6d6"></div>
<div class="t" style="left:877.7px;top:218.97px;font-size:8.3px;color:#4d4d4d;font-weight:700;letter-spacing:-0.12px;-webkit-text-stroke-width:0px;-webkit-text-stroke-width:0.05px;">Fills</div>
<div class="a" style="left:873px;top:231px;width:151px;height:1px;background:#d4d4d4"></div>
<div class="t" style="left:877.7px;top:236.77px;font-size:8.3px;color:#4d4d4d;font-weight:700;letter-spacing:-0.12px;-webkit-text-stroke-width:0px;-webkit-text-stroke-width:0.05px;">Borders</div>
<div class="a" style="left:873px;top:250px;width:151px;height:1px;background:#d4d4d4"></div>
<div class="t" style="left:877.7px;top:255.97px;font-size:8.3px;color:#4d4d4d;font-weight:700;letter-spacing:-0.12px;-webkit-text-stroke-width:0px;-webkit-text-stroke-width:0.05px;">Shadows</div>
<div class="a" style="left:873px;top:268px;width:151px;height:1px;background:#d4d4d4"></div>
<div class="t" style="left:877.7px;top:274.47px;font-size:8.3px;color:#4d4d4d;font-weight:700;letter-spacing:-0.12px;-webkit-text-stroke-width:0px;-webkit-text-stroke-width:0.05px;">Inner Shadows</div>
<div class="a" style="left:873px;top:287px;width:151px;height:1px;background:#d4d4d4"></div>
<div class="t" style="left:877.7px;top:292.27px;font-size:8.3px;color:#4d4d4d;font-weight:700;letter-spacing:-0.12px;-webkit-text-stroke-width:0px;-webkit-text-stroke-width:0.05px;">Gaussian Blur</div>
<div class="a" style="left:873px;top:305px;width:151px;height:1px;background:#d4d4d4"></div>
<svg class="a" style="left:937px;top:293.8px" width="5" height="8" viewBox="0 0 5 8"><path d="M0.6 2.8L2.4 0.8 4.2 2.8M0.6 5.2L2.4 7.2 4.2 5.2" fill="none" stroke="#7a7a7a" stroke-width="0.7"/></svg>
<div class="a" style="left:1009.3px;top:292.5px;width:8px;height:8px;background:#f2f2f2;border-radius:1.5px;box-shadow:0 0 0 0.7px #c8c8c8"></div>
<div class="a" style="left:0px;top:16px;width:4px;height:4px;background:radial-gradient(circle at 100% 100%, rgba(0,0,0,0) 3.3px, #9fb0bf 4.2px)"></div>
<div class="a" style="left:1020px;top:16px;width:4px;height:4px;background:radial-gradient(circle at 0 100%, rgba(0,0,0,0) 3.3px, #9fb0bf 4.2px)"></div>
<div class="a" style="left:0px;top:636px;width:4px;height:4px;background:radial-gradient(circle at 100% 0, rgba(0,0,0,0) 2.7px, #1c2828 3.7px)"></div>
<div class="a" style="left:1020px;top:636px;width:4px;height:4px;background:radial-gradient(circle at 0 0, rgba(0,0,0,0) 2.7px, #1c2828 3.7px)"></div>
</body></html>
